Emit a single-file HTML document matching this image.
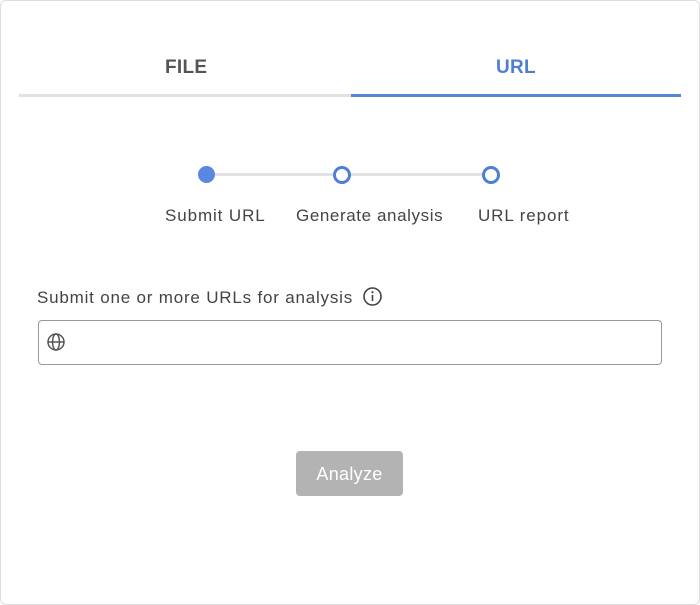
<!DOCTYPE html>
<html><head><style>
body{margin:0;width:700px;height:605px;background:#fff;font-family:"Liberation Sans",sans-serif;position:relative;overflow:hidden}
.card{position:absolute;left:0;top:0;width:698px;height:603px;border:1px solid #ddd;border-radius:6px}
.a{position:absolute;white-space:nowrap}
</style></head><body>
<div class="card"></div>
<div class="a" style="left:19px;top:94px;width:332px;height:3px;background:#e2e2e2"></div>
<div class="a" style="left:351px;top:94px;width:330px;height:3px;background:#5585d6"></div>
<div class="a" style="left:165px;top:57px;font-size:19px;color:#555;font-weight:bold;letter-spacing:0.3px">FILE</div>
<div class="a" style="left:496px;top:57px;font-size:19px;color:#4f7fd4;font-weight:bold;letter-spacing:0.3px">URL</div>
<div class="a" style="left:207px;top:173px;width:284px;height:3px;background:#e2e2e6"></div>
<div class="a" style="left:198px;top:166px;width:17px;height:17px;border-radius:50%;background:#5a87e0"></div>
<div class="a" style="left:333px;top:166px;width:12px;height:12px;border-radius:50%;border:3px solid #4f7fd4;background:#fff"></div>
<div class="a" style="left:482px;top:166px;width:12px;height:12px;border-radius:50%;border:3px solid #4f7fd4;background:#fff"></div>
<div class="a" style="left:165px;top:206px;font-size:17px;color:#444;letter-spacing:0.9px">Submit URL</div>
<div class="a" style="left:296px;top:206px;font-size:17px;color:#444;letter-spacing:0.6px">Generate analysis</div>
<div class="a" style="left:478px;top:206px;font-size:17px;color:#444;letter-spacing:0.9px">URL report</div>
<div class="a" style="left:37px;top:288px;font-size:17px;color:#444;letter-spacing:0.8px">Submit one or more URLs for analysis</div>
<svg class="a" style="left:362px;top:286px" width="21" height="21" viewBox="0 0 21 21"><circle cx="10.5" cy="10.5" r="8.5" fill="none" stroke="#444" stroke-width="1.6"/><path d="M10.5 9v6" stroke="#444" stroke-width="1.6" fill="none"/><circle cx="10.5" cy="6.2" r="1.1" fill="#444"/></svg>
<div class="a" style="left:38px;top:320px;width:622px;height:43px;border:1px solid #999;border-radius:4px"></div>
<svg class="a" style="left:46px;top:332px" width="20" height="20" viewBox="0 0 20 20"><g fill="none" stroke="#555" stroke-width="1.5"><circle cx="10" cy="10" r="8"/><ellipse cx="10" cy="10" rx="3.5" ry="8"/><path d="M2 10h16"/></g></svg>
<div class="a" style="left:296px;top:451px;width:107px;height:45px;border-radius:4px;background:#b3b3b3;color:#fff;font-size:18px;text-align:center;line-height:47px;letter-spacing:0.3px">Analyze</div>
</body></html>
